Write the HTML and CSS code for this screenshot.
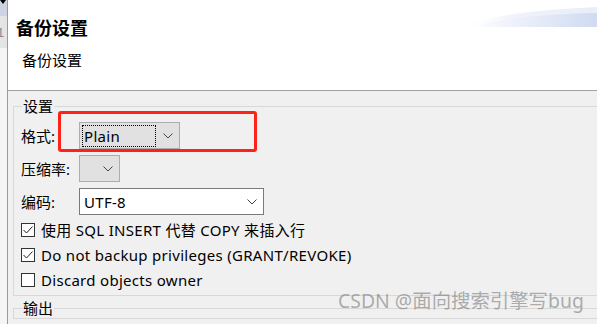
FILE: index.html
```html
<!DOCTYPE html>
<html lang="zh-CN">
<head>
<meta charset="utf-8">
<title>备份设置</title>
<link rel="stylesheet" href="styles.css">
</head>
<body>
<div class="app">
  <div class="sidebar">
    <div class="sb-top"><span class="sb-tri"></span></div>
    <div class="sb-line"><span class="sb-num">1</span></div>
    <div class="sb-rest"></div>
  </div>
  <div class="main">
    <div class="header">
      <div class="title">备份设置</div>
      <div class="subtitle">备份设置</div>
      <svg class="swoosh" width="134" height="28" viewBox="0 0 134 28">
        <defs>
          <linearGradient id="g1" x1="0" y1="0" x2="1" y2="0">
            <stop offset="0" stop-color="#ffffff" stop-opacity="0"/>
            <stop offset="0.35" stop-color="#f0f3fa"/>
            <stop offset="1" stop-color="#e8edf8"/>
          </linearGradient>
          <linearGradient id="g2" x1="0" y1="0" x2="1" y2="0">
            <stop offset="0" stop-color="#f6f8fc" stop-opacity="0"/>
            <stop offset="0.3" stop-color="#eff2fa"/>
            <stop offset="1" stop-color="#d0dbf1"/>
          </linearGradient>
        </defs>
        <path d="M0,27 Q30,12 134,7 L134,27 Z" fill="url(#g1)"/>
        <path d="M10,27 Q45,15 134,13 L134,27 Z" fill="url(#g2)"/>
      </svg>
    </div>
    <div class="content">
      <fieldset class="group">
        <legend class="legend">设置</legend>
        <div class="row">
          <label class="lbl">格式:</label>
          <div class="combo combo-format">
            <span class="focus">Plain</span>
            <svg class="chev" width="10" height="6" viewBox="0 0 10 6"><path d="M0.5,0.5 L5,5 L9.5,0.5" fill="none" stroke="#444" stroke-width="1"/></svg>
          </div>
        </div>
        <div class="row">
          <label class="lbl">压缩率:</label>
          <div class="combo combo-small">
            <svg class="chev" width="10" height="6" viewBox="0 0 10 6"><path d="M0.5,0.5 L5,5 L9.5,0.5" fill="none" stroke="#444" stroke-width="1"/></svg>
          </div>
        </div>
        <div class="row">
          <label class="lbl">编码:</label>
          <div class="combo combo-edit">
            <span class="val">UTF-8</span>
            <svg class="chev" width="10" height="6" viewBox="0 0 10 6"><path d="M0.5,0.5 L5,5 L9.5,0.5" fill="none" stroke="#444" stroke-width="1"/></svg>
          </div>
        </div>
        <div class="checks">
          <div class="check">
            <span class="box"><svg width="12" height="12" viewBox="0 0 12 12"><path d="M1.5,6 L4.5,9 L10.5,2.5" fill="none" stroke="#222" stroke-width="1"/></svg></span>
            <span class="ctext">使用 SQL INSERT 代替 COPY 来插入行</span>
          </div>
          <div class="check">
            <span class="box"><svg width="12" height="12" viewBox="0 0 12 12"><path d="M1.5,6 L4.5,9 L10.5,2.5" fill="none" stroke="#222" stroke-width="1"/></svg></span>
            <span class="ctext">Do not backup privileges (GRANT/REVOKE)</span>
          </div>
          <div class="check">
            <span class="box"></span>
            <span class="ctext">Discard objects owner</span>
          </div>
        </div>
      </fieldset>
      <fieldset class="group group-out">
        <legend class="legend">输出</legend>
      </fieldset>
      <div class="mark"></div>
    </div>
  </div>
</div>
<div class="watermark">CSDN @面向搜索引擎写bug</div>
</body>
</html>
```
FILE: styles.css
```css
html, body {
  margin: 0;
  padding: 0;
  width: 597px;
  height: 324px;
  overflow: hidden;
  background: #f0f0f0;
  font-family: "Noto Sans", "Noto Sans CJK SC", sans-serif;
  color: #000;
}
.app {
  display: flex;
  height: 324px;
  position: relative;
  overflow: hidden;
}
.sidebar {
  width: 7px;
  flex-shrink: 0;
  border-right: 1px solid #9a9a9a;
  display: flex;
  flex-direction: column;
  overflow: hidden;
}
.sb-top {
  height: 16px;
  flex-shrink: 0;
  background: #cdd3e2;
  position: relative;
}
.sb-tri {
  position: absolute;
  left: 0;
  top: 0;
  width: 0;
  height: 0;
  border-left: 3px solid transparent;
  border-right: 3px solid transparent;
  border-top: 4px solid #000;
}
.sb-line {
  height: 32px;
  flex-shrink: 0;
  background: #e4e4e4;
  display: flex;
  align-items: center;
}
.sb-num {
  font-family: "Liberation Sans", sans-serif;
  font-size: 13px;
  color: #8a8a8a;
  margin-left: -3px;
}
.sb-rest {
  flex: 1;
  background: #f5f5f5;
}
.main {
  flex: 1;
  display: flex;
  flex-direction: column;
  min-width: 0;
  overflow: hidden;
}
.header {
  height: 91px;
  flex-shrink: 0;
  background: #fff;
  border-bottom: 1px solid #a0a0a0;
  position: relative;
  padding-left: 8px;
  box-sizing: border-box;
}
.title {
  font-size: 18px;
  font-weight: bold;
  line-height: 24px;
  padding-top: 16px;
}
.subtitle {
  font-size: 15px;
  line-height: 20px;
  margin-top: 10px;
  margin-left: 6px;
}
.swoosh {
  position: absolute;
  right: 0;
  top: 0;
}
.content {
  flex: 1;
  min-height: 0;
  background: #f0f0f0;
  padding: 5px 0 0 5px;
}
.group {
  margin: 0 -12px 0 0;
  padding: 6px 0 8px 7px;
  border: 1px solid #d8d8d8;
  min-width: 0;
}
.legend {
  font-size: 15px;
  line-height: 20px;
  padding: 0 1px;
  margin-left: 1px;
}
.row {
  display: flex;
  align-items: center;
  height: 27px;
  margin-bottom: 6px;
}
.lbl {
  width: 58px;
  font-size: 15px;
  line-height: 20px;
}
.combo {
  height: 27px;
  box-sizing: border-box;
  display: flex;
  align-items: center;
  position: relative;
}
.combo-format {
  width: 101px;
  background: #e1e1e1;
  border: 1px solid #adadad;
  padding-left: 2px;
}
.combo-small {
  width: 41px;
  background: #e1e1e1;
  border: 1px solid #adadad;
}
.combo-edit {
  width: 185px;
  background: #fff;
  border: 1px solid #7a7a7a;
  padding-left: 4px;
}
.focus {
  width: 74px;
  height: 22px;
  box-sizing: border-box;
  border: 1px dotted #000;
  font-size: 15px;
  line-height: 20px;
  padding-left: 1px;
  letter-spacing: 0.3px;
}
.val {
  font-size: 15px;
  line-height: 20px;
  letter-spacing: 0.3px;
}
.chev {
  position: absolute;
  right: 6px;
  top: 10px;
}
.checks {
  display: flex;
  flex-direction: column;
  gap: 11px;
  margin-top: 8px;
}
.check {
  display: flex;
  align-items: center;
  height: 14px;
  gap: 6px;
}
.box {
  width: 14px;
  height: 14px;
  box-sizing: border-box;
  border: 1px solid #333;
  background: #fff;
  display: flex;
  align-items: center;
  justify-content: center;
}
.ctext {
  font-size: 15px;
  line-height: 20px;
  white-space: nowrap;
  letter-spacing: 0.3px;
}
.group-out {
  margin-top: 2px;
  height: 14px;
  padding-top: 0;
  padding-bottom: 0;
}
.mark {
  position: absolute;
  left: 58px;
  top: 111px;
  width: 199px;
  height: 41px;
  box-sizing: border-box;
  border: 3px solid #ff2317;
  border-radius: 3px;
}
.watermark {
  position: absolute;
  left: 338px;
  top: 288px;
  font-size: 19.4px;
  line-height: 26px;
  color: rgba(110, 110, 110, 0.55);
  white-space: nowrap;
}
```
